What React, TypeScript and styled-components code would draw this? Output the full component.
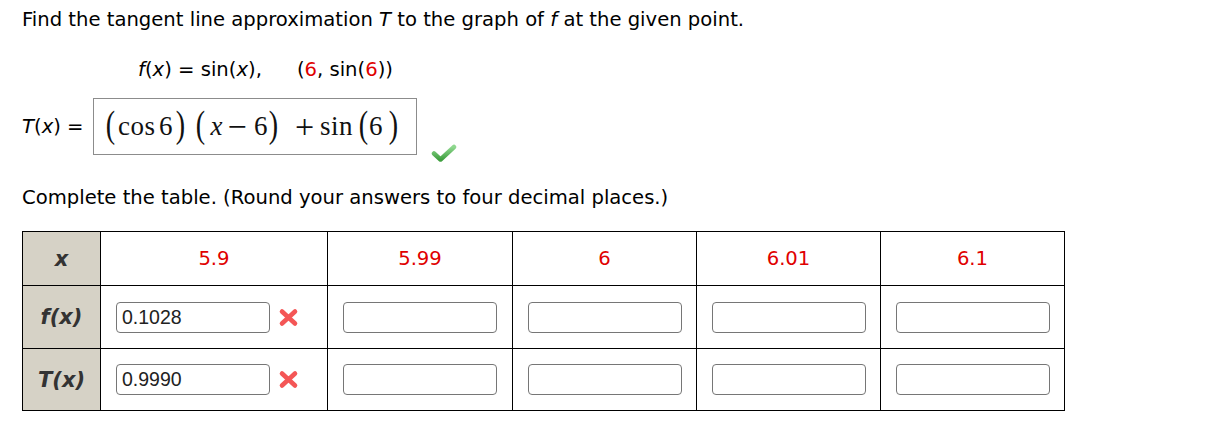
import styled, { createGlobalStyle } from 'styled-components';

const GlobalStyle = createGlobalStyle`
  body {
    margin: 0;
    background: #fff;
    color: #000;
    font-family: "DejaVu Sans", Verdana, sans-serif;
  }
`;

const Page = styled.div`
  padding: 8px 22px 0 22px;
`;

const Line = styled.div<{ $mt: number; $indent?: number }>`
  font-size: 19.6px;
  line-height: 24px;
  margin-top: ${(p) => p.$mt}px;
  padding-left: ${(p) => p.$indent || 0}px;
  white-space: nowrap;
`;

const Red = styled.span`
  color: #e00000;
`;

const Gap = styled.span<{ $w: number }>`
  display: inline-block;
  width: ${(p) => p.$w}px;
`;

const AnswerRow = styled.div`
  display: flex;
  align-items: center;
  margin-top: 16px;
`;

const AnswerLabel = styled.span`
  font-size: 19.6px;
  width: 71px;
  white-space: nowrap;
`;

const MathBox = styled.div`
  width: 324px;
  height: 57px;
  box-sizing: border-box;
  border: 1px solid #8c8c8c;
  display: flex;
  align-items: center;
  padding-left: 11px;
  font-family: "Liberation Serif", "Times New Roman", serif;
  font-size: 27px;
  color: #111;
  white-space: nowrap;
`;

const Tok = styled.span<{ $ml: number; $w: number; $italic?: boolean; $fn?: boolean; $op?: boolean }>`
  display: inline-block;
  flex: none;
  margin-left: ${(p) => p.$ml}px;
  width: ${(p) => p.$w}px;
  text-align: ${(p) => (p.$fn ? 'left' : 'center')};
  font-style: ${(p) => (p.$italic ? 'italic' : 'normal')};
  font-size: ${(p) => (p.$op ? '34px' : 'inherit')};
  letter-spacing: ${(p) => (p.$fn ? '0.5px' : '0')};
`;

const Paren = styled(Tok)`
  font-size: 33px;
  transform: scale(0.85, 1.12);
  position: relative;
  top: -1px;
`;

const CheckWrap = styled.div`
  align-self: flex-end;
  margin: 0 0 -7px 14px;
  display: flex;
`;

const Table = styled.table`
  margin-top: 21px;
  border-collapse: collapse;
  table-layout: fixed;
  width: 1043px;
  font-size: 19.6px;
`;

const Cell = styled.td<{ $h: number }>`
  border: 1px solid #000;
  height: ${(p) => p.$h}px;
  padding: 0;
  text-align: center;
  vertical-align: middle;
`;

const HeadCell = styled(Cell)`
  color: #e00000;
`;

const LabelCell = styled(Cell)`
  background: #d6d2c6;
  color: #333;
  font-weight: bold;
  font-style: italic;
  font-size: 21px;
`;

const InputSlot = styled.div<{ $start?: boolean }>`
  display: flex;
  align-items: center;
  justify-content: ${(p) => (p.$start ? 'flex-start' : 'center')};
  padding-left: ${(p) => (p.$start ? 15 : 0)}px;
  gap: 8px;
`;

const Field = styled.div`
  width: 154px;
  height: 31px;
  box-sizing: border-box;
  border: 1px solid #767676;
  border-radius: 4px;
  background: #fff;
  font-family: "Liberation Sans", Arial, sans-serif;
  font-size: 19.5px;
  color: #222;
  text-align: left;
  padding: 0 5px;
  line-height: 28px;
`;

const Check = () => (
  <svg width="26" height="18" viewBox="0 0 26 18">
    <defs>
      <linearGradient id="chk" x1="0" y1="0" x2="0" y2="1">
        <stop offset="0" stopColor="#8fd88f" />
        <stop offset="1" stopColor="#3f9f3f" />
      </linearGradient>
    </defs>
    <path d="M3 9.5 L9.5 15.5 L23 3" fill="none" stroke="url(#chk)" strokeWidth="4.5" strokeLinecap="round" strokeLinejoin="round" />
  </svg>
);

const Cross = () => (
  <svg width="21" height="19" viewBox="0 0 21 19">
    <path d="M4 3.5 L17 15.5 M17 3.5 L4 15.5" stroke="#f45656" strokeWidth="4.6" strokeLinecap="round" />
  </svg>
);

const xs = ['5.9', '5.99', '6', '6.01', '6.1'];
const widths = [78, 227, 185, 184, 184, 184];
const rows = [
  { label: 'f(x)', value: '0.1028', h: 62 },
  { label: 'T(x)', value: '0.9990', h: 61 },
];

export default function App() {
  return (
    <>
      <GlobalStyle />
      <Page>
        <Line $mt={0}>
          Find the tangent line approximation <i>T</i> to the graph of <i>f</i> at the given point.
        </Line>
        <Line $mt={26} $indent={116}>
          <i>f</i>(<i>x</i>) = sin(<i>x</i>),<Gap $w={35} />(<Red>6</Red>, sin(<Red>6</Red>))
        </Line>
        <AnswerRow>
          <AnswerLabel>
            <i>T</i>(<i>x</i>) =
          </AnswerLabel>
          <MathBox>
            <Paren $ml={0} $w={10}>(</Paren>
            <Tok $ml={3} $w={38} $fn>cos</Tok>
            <Tok $ml={3} $w={13}>6</Tok>
            <Paren $ml={3} $w={10}>)</Paren>
            <Paren $ml={10} $w={10}>(</Paren>
            <Tok $ml={5} $w={13} $italic>x</Tok>
            <Tok $ml={3} $w={22} $op>−</Tok>
            <Tok $ml={6} $w={12}>6</Tok>
            <Paren $ml={2} $w={10}>)</Paren>
            <Tok $ml={16} $w={21} $op>+</Tok>
            <Tok $ml={5} $w={37} $fn>sin</Tok>
            <Paren $ml={1} $w={10}>(</Paren>
            <Tok $ml={1} $w={13}>6</Tok>
            <Paren $ml={6} $w={10}>)</Paren>
          </MathBox>
          <CheckWrap>
            <Check />
          </CheckWrap>
        </AnswerRow>
        <Line $mt={31}>Complete the table. (Round your answers to four decimal places.)</Line>
        <Table>
          <colgroup>
            {widths.map((w, i) => (
              <col key={i} style={{ width: w }} />
            ))}
          </colgroup>
          <tbody>
            <tr>
              <LabelCell $h={53}>x</LabelCell>
              {xs.map((x) => (
                <HeadCell key={x} $h={53}>
                  {x}
                </HeadCell>
              ))}
            </tr>
            {rows.map((r) => (
              <tr key={r.label}>
                <LabelCell $h={r.h}>{r.label}</LabelCell>
                <Cell $h={r.h}>
                  <InputSlot $start>
                    <Field>{r.value}</Field>
                    <Cross />
                  </InputSlot>
                </Cell>
                {xs.slice(1).map((x) => (
                  <Cell key={x} $h={r.h}>
                    <InputSlot>
                      <Field />
                    </InputSlot>
                  </Cell>
                ))}
              </tr>
            ))}
          </tbody>
        </Table>
      </Page>
    </>
  );
}
